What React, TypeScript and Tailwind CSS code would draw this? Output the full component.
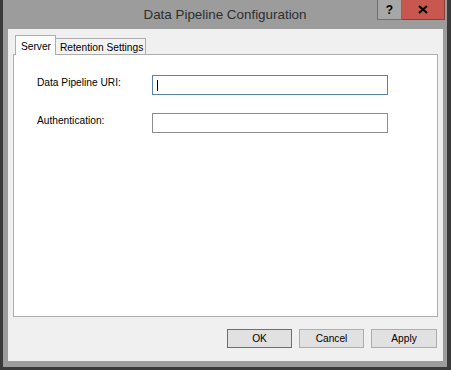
const App = () => {
  return (
    <div className="w-[451px] h-[370px] bg-[#3a3a3a] pl-[3px] pr-[4px] pb-[3px] font-['Liberation_Sans',Arial,sans-serif]">
      <div className="h-full bg-[#9c9c9c] flex flex-col">
        {/* Title bar */}
        <div className="h-[29px] grid grid-cols-[1fr_auto_1fr]">
          <div></div>
          <div className="pt-[6px] text-[13.4px] text-[#2e2e2e] leading-[18px]">Data Pipeline Configuration</div>
          <div className="flex justify-end items-start pr-[2px]">
            <div className="w-[25px] h-[20px] bg-[#a7a7a7] border border-[#6f6f6f] border-t-0 flex items-center justify-center text-[12px] font-bold text-black leading-none">
              ?
            </div>
            <div className="w-[43px] h-[20px] bg-[#c8574f] border border-[#8d3d37] border-t-0 border-l-0 flex items-center justify-center">
              <svg width="10" height="9" viewBox="0 0 10 9">
                <path d="M1 1 L9 8 M9 1 L1 8" stroke="#000" strokeWidth="2.2" />
              </svg>
            </div>
          </div>
        </div>

        {/* Client area */}
        <div className="flex-1 ml-[5px] mr-[4px] mb-[6px] bg-[#f0f0f0] px-[5px] pt-[6px] flex flex-col">
          <div className="flex items-end ml-[2px] text-[10.2px] text-black">
            <div className="w-[41px] h-[20px] bg-white border border-[#adadad] border-b-0 relative z-10 -mb-px pl-[5px] pt-[3px]">
              Server
            </div>
            <div className="w-[90px] h-[16px] bg-[#f2f2f2] border border-[#adadad] border-l-0 border-b-0 pl-[4px] pt-[1px]">
              Retention Settings
            </div>
          </div>
          <div className="h-[263px] bg-white border border-[#adadad] pl-[23px] pt-[20px] text-[10.2px] text-black">
            <div className="flex items-start h-[20px]">
              <div className="w-[115px] pt-[1px] leading-[14px]">Data Pipeline URI:</div>
              <div className="w-[236px] h-[20px] border border-[#5a83ab] flex items-center pl-[4px]">
                <div className="w-px h-[11px] bg-black"></div>
              </div>
            </div>
            <div className="flex items-start h-[20px] mt-[18px]">
              <div className="w-[115px] pt-[1px] leading-[14px]">Authentication:</div>
              <div className="w-[236px] h-[20px] border border-[#8c8c8c]"></div>
            </div>
          </div>
          <div className="flex justify-end gap-[7px] mt-[12px] mr-[1px] text-[10.2px] text-black">
            <div className="w-[65px] h-[19px] bg-[#e1e1e1] border border-[#3d7ab3] flex items-center justify-center">OK</div>
            <div className="w-[65px] h-[19px] bg-[#e1e1e1] border border-[#adadad] flex items-center justify-center">Cancel</div>
            <div className="w-[66px] h-[19px] bg-[#e1e1e1] border border-[#adadad] flex items-center justify-center">Apply</div>
          </div>
        </div>
      </div>
    </div>
  );
};

export default App;
